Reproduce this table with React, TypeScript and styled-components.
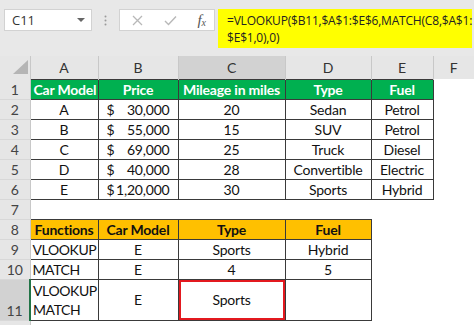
import React from 'react'
import styled, { createGlobalStyle } from 'styled-components'

const GlobalStyle = createGlobalStyle`
  html, body {
    margin: 0;
    padding: 0;
    background: #fff;
  }
  body {
    width: 474px;
    height: 325px;
    overflow: hidden;
    font-family: Lato, 'Liberation Sans', sans-serif;
  }
`

const Window = styled.div`
  width: 474px;
  height: 325px;
  overflow: hidden;
  background: #fff;
`

const FormulaBar = styled.div`
  display: flex;
  align-items: flex-start;
  height: 56px;
  box-sizing: border-box;
  padding: 9px 0 0 4px;
  background: #e8e8e8;
`

const NameBox = styled.div`
  width: 88px;
  height: 22px;
  box-sizing: border-box;
  display: flex;
  align-items: center;
  justify-content: space-between;
  padding: 0 6px 0 7px;
  background: #fff;
  border: 1px solid #d2d2d2;
  font-family: 'Open Sans', sans-serif;
  font-size: 13px;
  color: #333;
`

const Caret = styled.span`
  width: 0;
  height: 0;
  border-left: 4px solid transparent;
  border-right: 4px solid transparent;
  border-top: 4px solid #666;
`

const Grip = styled.div`
  width: 27px;
  height: 22px;
  display: flex;
  align-items: center;
  justify-content: center;
`

const FxBox = styled.div`
  width: 96px;
  height: 22px;
  box-sizing: border-box;
  display: flex;
  align-items: center;
  justify-content: space-between;
  padding: 0 8px 0 12px;
  background: #fff;
  border: 1px solid #d2d2d2;
`

const FxLabel = styled.span`
  font-family: 'Liberation Serif', serif;
  font-style: italic;
  font-size: 15px;
  color: #555;

  sub {
    font-size: 10px;
    vertical-align: -1px;
  }
`

const FormulaBox = styled.div`
  margin-left: 3px;
  width: 254px;
  height: 39px;
  box-sizing: border-box;
  padding: 3px 0 0 9px;
  background: #ffff00;
  font-family: 'Open Sans', sans-serif;
  font-size: 12px;
  letter-spacing: -0.2px;
  line-height: 17px;
  color: #222;
  white-space: nowrap;
  overflow: hidden;
`

const Sheet = styled.table`
  border-collapse: collapse;
  table-layout: fixed;
  width: 474px;
  font-family: Lato, 'Liberation Sans', sans-serif;
  font-size: 14px;
  letter-spacing: -0.2px;
  color: #111;
`

const ColHead = styled.th<{ $active?: boolean }>`
  height: 21px;
  padding: 0;
  background: ${p => (p.$active ? '#d2d2d2' : '#e6e6e6')};
  border-right: 1px solid #c8c8c8;
  font-size: 14px;
  font-weight: normal;
  color: #333;
  text-align: center;
  vertical-align: middle;
`

const Corner = styled.th`
  height: 21px;
  padding: 0 2px 2px 0;
  background: #e6e6e6;
  border-right: 1px solid #c8c8c8;
  text-align: right;
  vertical-align: bottom;
`

const RowNum = styled.th<{ $active?: boolean }>`
  padding: 0;
  background: ${p => (p.$active ? '#d2d2d2' : '#e6e6e6')};
  border-bottom: 1px solid #d8d8d8;
  border-right: ${p => (p.$active ? '2px solid #217346' : '1px solid #c8c8c8')};
  font-size: 14px;
  font-weight: normal;
  color: #444;
  text-align: center;
  vertical-align: bottom;
  line-height: 19px;
`

type Fill = 'green' | 'gold'

const fills: Record<Fill, string> = {
  green: '#00b050',
  gold: '#ffc000',
}

const Cell = styled.td<{
  $fill?: Fill
  $align?: 'left' | 'center' | 'right'
  $boxed?: boolean
  $picked?: boolean
}>`
  padding: 0 ${p => (p.$align === 'left' ? '0 0 2px' : '3px')};
  line-height: 19px;
  background: ${p => (p.$fill ? fills[p.$fill] : '#fff')};
  color: ${p => (p.$fill === 'green' ? '#fff' : '#111')};
  font-weight: ${p => (p.$fill ? 700 : 400)};
  text-align: ${p => p.$align || 'center'};
  letter-spacing: ${p => (p.$align === 'left' ? '-0.4px' : 'inherit')};
  border: ${p => (p.$boxed ? '1px solid #3a3a3a' : 'none')};
  box-shadow: ${p => (p.$picked ? 'inset 0 0 0 2px #e3191f' : 'none')};
  white-space: nowrap;
  overflow: hidden;
`

const Money = styled.div`
  display: flex;
  justify-content: space-between;
  padding: 0 5px;
`

const Row = styled.tr<{ $tall?: boolean }>`
  height: ${p => (p.$tall ? '41px' : '20px')};
`

const cars = [
  ['A', '30,000', '20', 'Sedan', 'Petrol'],
  ['B', '55,000', '15', 'SUV', 'Petrol'],
  ['C', '69,000', '25', 'Truck', 'Diesel'],
  ['D', '40,000', '28', 'Convertible', 'Electric'],
  ['E', '1,20,000', '30', 'Sports', 'Hybrid'],
]

const lookups = [
  ['VLOOKUP', 'E', 'Sports', 'Hybrid'],
  ['MATCH', 'E', '4', '5'],
]

const columns = ['A', 'B', 'C', 'D', 'E', 'F']
const widths = [30, 68, 80, 107, 86, 62, 41]

export default function App() {
  return (
    <Window>
      <GlobalStyle />
      <FormulaBar>
        <NameBox>
          C11
          <Caret />
        </NameBox>
        <Grip>
          <svg width="3" height="11" viewBox="0 0 3 11">
            <circle cx="1.5" cy="1.5" r="1" fill="#9a9a9a" />
            <circle cx="1.5" cy="5.5" r="1" fill="#9a9a9a" />
            <circle cx="1.5" cy="9.5" r="1" fill="#9a9a9a" />
          </svg>
        </Grip>
        <FxBox>
          <svg width="11" height="11" viewBox="0 0 11 11">
            <path d="M1 1 L10 10 M10 1 L1 10" stroke="#b8b8b8" strokeWidth="1.3" />
          </svg>
          <svg width="13" height="11" viewBox="0 0 13 11">
            <path d="M1 6 L4.5 9.5 L12 1.5" stroke="#b8b8b8" strokeWidth="1.4" fill="none" />
          </svg>
          <FxLabel>
            f<sub>x</sub>
          </FxLabel>
        </FxBox>
        <FormulaBox>
          =VLOOKUP($B11,$A$1:$E$6,MATCH(C8,$A$1:
          <br />
          $E$1,0),0)
        </FormulaBox>
      </FormulaBar>

      <Sheet>
        <colgroup>
          {widths.map((w, i) => (
            <col key={i} style={{ width: w }} />
          ))}
        </colgroup>
        <thead>
          <tr>
            <Corner>
              <svg width="15" height="14" viewBox="0 0 15 14">
                <path d="M15 0 L15 14 L0 14 Z" fill="#b5b5b5" />
              </svg>
            </Corner>
            {columns.map(c => (
              <ColHead key={c} $active={c === 'C'}>
                {c}
              </ColHead>
            ))}
          </tr>
        </thead>
        <tbody>
          <Row>
            <RowNum>1</RowNum>
            {['Car Model', 'Price', 'Mileage in miles', 'Type', 'Fuel'].map(h => (
              <Cell key={h} $fill="green" $boxed>
                {h}
              </Cell>
            ))}
            <Cell />
          </Row>
          {cars.map(([model, price, miles, type, fuel], i) => (
            <Row key={model}>
              <RowNum>{i + 2}</RowNum>
              <Cell $boxed>{model}</Cell>
              <Cell $boxed>
                <Money>
                  <span>$</span>
                  <span>{price}</span>
                </Money>
              </Cell>
              <Cell $boxed>{miles}</Cell>
              <Cell $boxed>{type}</Cell>
              <Cell $boxed>{fuel}</Cell>
              <Cell />
            </Row>
          ))}
          <Row>
            <RowNum>7</RowNum>
            <Cell colSpan={6} />
          </Row>
          <Row>
            <RowNum>8</RowNum>
            {['Functions', 'Car Model', 'Type', 'Fuel'].map(h => (
              <Cell key={h} $fill="gold" $boxed>
                {h}
              </Cell>
            ))}
            <Cell colSpan={2} />
          </Row>
          {lookups.map(([fn, model, type, fuel], i) => (
            <Row key={fn}>
              <RowNum>{i + 9}</RowNum>
              <Cell $boxed $align="left">
                {fn}
              </Cell>
              <Cell $boxed>{model}</Cell>
              <Cell $boxed>{type}</Cell>
              <Cell $boxed>{fuel}</Cell>
              <Cell colSpan={2} />
            </Row>
          ))}
          <Row $tall>
            <RowNum $active>11</RowNum>
            <Cell $boxed $align="left">
              VLOOKUP
              <br />
              MATCH
            </Cell>
            <Cell $boxed>E</Cell>
            <Cell $boxed $picked>
              Sports
            </Cell>
            <Cell $boxed />
            <Cell colSpan={2} />
          </Row>
          <Row>
            <RowNum>12</RowNum>
            <Cell colSpan={6} />
          </Row>
        </tbody>
      </Sheet>
    </Window>
  )
}
